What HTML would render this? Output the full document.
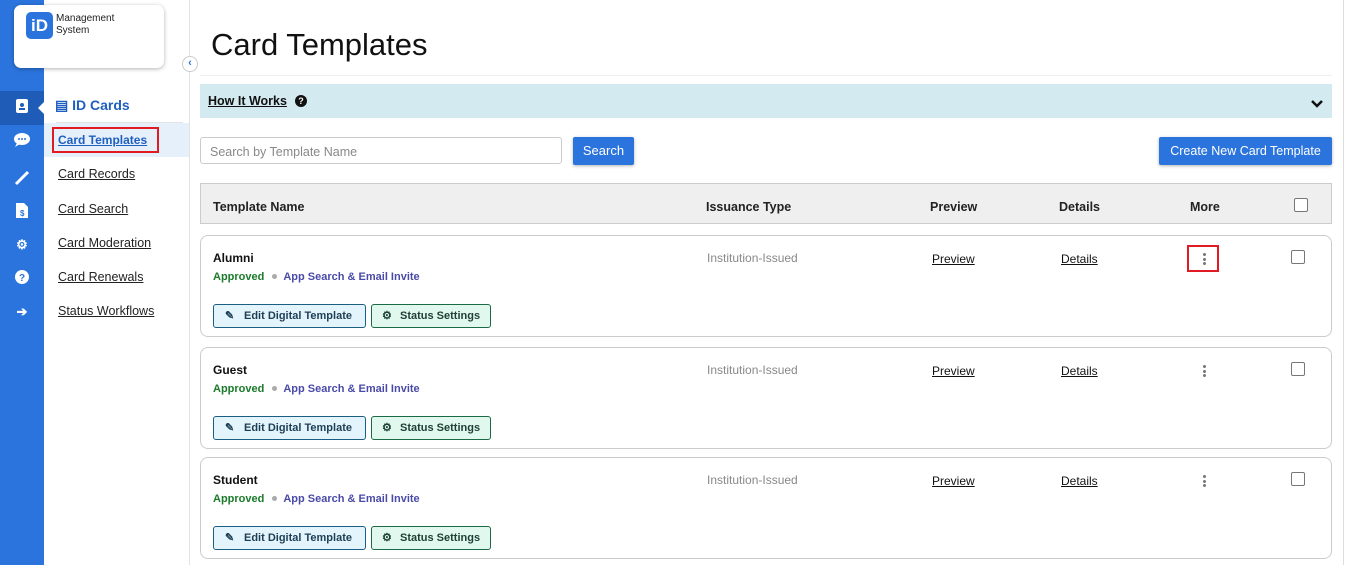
<!DOCTYPE html>
<html><head><meta charset="utf-8"><style>
*{box-sizing:border-box;margin:0;padding:0}
body{width:1347px;height:565px;overflow:hidden;background:#fff;font-family:"Liberation Sans",sans-serif;position:relative;color:#222}
.a{position:absolute}
.side{left:0;top:0;width:44px;height:565px;background:#2b74dd}
.act{left:0;top:91px;width:44px;height:34px;background:#1e5cb8}
.ic{left:13px;width:18px;height:18px;color:#fff;font-size:13px;text-align:center;line-height:18px;font-weight:bold}
.logo{left:14px;top:5px;width:150px;height:63px;background:#fff;border-radius:7px;box-shadow:0 1px 4px rgba(0,0,0,.3)}
.nav{left:44px;top:0;width:146px;height:565px;border-right:1px solid #e3e3e3}
.nl{left:58px;font-size:12.5px;color:#222;text-decoration:underline}
.btn{background:#2b74dd;color:#fff;font-size:13px;text-align:center;border-radius:2px;box-shadow:0 1px 3px rgba(0,0,0,.3)}
.card{left:200px;width:1132px;height:102px;border:1px solid #ccc;border-radius:8px}
.card .n{left:12px;top:15px;font-weight:bold;font-size:12px;color:#111}
.card .st{left:12px;top:35px;font-size:11px;font-weight:bold;color:#1a7a2a}
.card .st span{color:#4a4aa8}
.card .st i{display:inline-block;width:5px;height:5px;border-radius:50%;background:#aaa;margin:0 6px 2px 8px;vertical-align:middle}
.b1{left:12px;top:68px;width:153px;height:24px;border:1px solid #1b5e84;background:#e3f4fc;border-radius:3px;font-size:11px;font-weight:bold;color:#1d3f55;line-height:22px;padding-left:30px}
.b2{left:170px;top:68px;width:120px;height:24px;border:1px solid #1b6a45;background:#e1f8ee;border-radius:3px;font-size:11px;font-weight:bold;color:#1d3f35;line-height:22px;padding-left:28px}
.card .it{left:506px;top:15px;font-size:12px;color:#888}
.card .pv{left:731px;top:16px;font-size:12px;text-decoration:underline;color:#111}
.card .dt{left:860px;top:16px;font-size:12px;text-decoration:underline;color:#111}
.dots{left:1002px;top:17px;width:3px}
.dots b{display:block;width:3px;height:3px;border-radius:50%;background:#777;margin-bottom:1.5px}
.cb{width:14px;height:14px;border:1px solid #777;border-radius:2px;background:#fff}
.th{font-size:12.5px;font-weight:bold;top:16px;color:#222}
</style></head><body>
<div class="a side"></div>
<div class="a act"></div>
<div class="a" style="left:44px;top:102px;width:0;height:0;border-top:6px solid transparent;border-bottom:6px solid transparent;border-right:6px solid #fff;margin-left:-6px"></div>
<div class="a ic" style="top:99px"><svg width="12" height="14"><rect x="0" y="0" width="12" height="14" rx="2" fill="#fff"/><circle cx="6" cy="6" r="2" fill="#1e5cb8"/><rect x="3" y="9" width="6" height="2" fill="#1e5cb8"/></svg></div>
<div class="a ic" style="top:133px"><svg width="16" height="14"><ellipse cx="8" cy="6" rx="8" ry="6" fill="#fff"/><path d="M3 10l-2 4 5-3z" fill="#fff"/><circle cx="5" cy="6" r="1" fill="#2b74dd"/><circle cx="8" cy="6" r="1" fill="#2b74dd"/><circle cx="11" cy="6" r="1" fill="#2b74dd"/></svg></div>
<div class="a ic" style="top:170px"><svg width="16" height="16"><path d="M2 14L14 2M5 9l2 2M9 5l2 2" stroke="#fff" stroke-width="3"/></svg></div>
<div class="a ic" style="top:203px"><svg width="12" height="15"><path d="M0 0h8l4 4v11H0z" fill="#fff"/><text x="4" y="13" font-size="8" fill="#2b74dd">$</text></svg></div>
<div class="a ic" style="top:236px">⚙</div>
<div class="a ic" style="top:270px"><svg width="14" height="14"><circle cx="7" cy="7" r="7" fill="#fff"/><text x="4" y="11" font-size="10" font-weight="bold" fill="#2b74dd" font-family="Liberation Sans">?</text></svg></div>
<div class="a ic" style="top:303px">➔</div>
<div class="a nav"></div>
<div class="a logo"><div class="a" style="left:12px;top:7px;width:27px;height:27px;background:#2b74dd;border-radius:5px;color:#fff;font-weight:bold;font-size:17px;line-height:27px;text-align:center">iD</div><div class="a" style="left:42px;top:8px;font-size:10px;line-height:12px;color:#222">Management<br>System</div></div>
<div class="a" style="left:182px;top:56px;width:16px;height:16px;border-radius:50%;background:#fff;border:1px solid #ccc;color:#2b74dd;font-size:11px;text-align:center;line-height:13px;font-weight:bold">‹</div>
<div class="a" style="left:55px;top:97px;font-size:14px;font-weight:bold;color:#1f5fbf">▤ ID Cards</div>
<div class="a" style="left:56px;top:122px;width:127px;height:1px;background:#e3e3e3"></div>
<div class="a" style="left:44px;top:123px;width:145px;height:34px;background:#e6f0fb"></div>
<div class="a" style="left:52px;top:127px;width:107px;height:26px;border:2px solid #e01b24"></div>
<div class="a nl" style="top:133px;font-weight:bold;color:#1f5fbf;font-size:12px">Card Templates</div>
<div class="a nl" style="top:167px">Card Records</div>
<div class="a nl" style="top:202px">Card Search</div>
<div class="a nl" style="top:236px">Card Moderation</div>
<div class="a nl" style="top:270px">Card Renewals</div>
<div class="a nl" style="top:304px">Status Workflows</div>

<div class="a" style="left:211px;top:27px;font-size:31px;color:#111">Card Templates</div>
<div class="a" style="left:200px;top:75px;width:1132px;height:1px;background:#eee"></div>
<div class="a" style="left:1343px;top:0;width:1px;height:565px;background:#ddd"></div>
<div class="a" style="left:200px;top:84px;width:1132px;height:34px;background:#d2eaf0"></div>
<div class="a" style="left:208px;top:94px;font-size:12.5px;font-weight:bold;text-decoration:underline;color:#111">How It Works</div>
<div class="a" style="left:295px;top:95px;width:12px;height:12px;border-radius:50%;background:#111;color:#fff;font-size:9px;font-weight:bold;text-align:center;line-height:12px">?</div>
<div class="a" style="left:1311px;top:96px"><svg width="12" height="10"><path d="M1 2l5 5 5-5" stroke="#111" stroke-width="2.5" fill="none"/></svg></div>
<div class="a" style="left:200px;top:137px;width:362px;height:27px;border:1px solid #ccc;border-radius:3px;font-size:12.5px;color:#888;padding:7px 9px">Search by Template Name</div>
<div class="a btn" style="left:573px;top:137px;width:61px;height:28px;line-height:28px">Search</div>
<div class="a btn" style="left:1159px;top:137px;width:173px;height:28px;line-height:28px;font-size:12.5px">Create New Card Template</div>

<div class="a" style="left:200px;top:183px;width:1132px;height:41px;background:#efefef;border:1px solid #ccc">
<div class="a th" style="left:12px">Template Name</div>
<div class="a th" style="left:505px">Issuance Type</div>
<div class="a th" style="left:729px">Preview</div>
<div class="a th" style="left:858px">Details</div>
<div class="a th" style="left:989px">More</div>
<div class="a cb" style="left:1093px;top:14px"></div>
</div>

<div class="a card" style="top:235px"><div class="a n">Alumni</div><div class="a st">Approved<i></i><span>App Search &amp; Email Invite</span></div><div class="a b1">Edit Digital Template<span class="a" style="left:11px;top:0">✎</span></div><div class="a b2">Status Settings<span class="a" style="left:10px;top:0">⚙</span></div><div class="a it">Institution-Issued</div><div class="a pv">Preview</div><div class="a dt">Details</div><div class="a dots"><b></b><b></b><b></b></div><div class="a cb" style="left:1090px;top:14px"></div><div class="a" style="left:986px;top:9px;width:32px;height:27px;border:2px solid #e01b24"></div></div>
<div class="a card" style="top:347px"><div class="a n">Guest</div><div class="a st">Approved<i></i><span>App Search &amp; Email Invite</span></div><div class="a b1">Edit Digital Template<span class="a" style="left:11px;top:0">✎</span></div><div class="a b2">Status Settings<span class="a" style="left:10px;top:0">⚙</span></div><div class="a it">Institution-Issued</div><div class="a pv">Preview</div><div class="a dt">Details</div><div class="a dots"><b></b><b></b><b></b></div><div class="a cb" style="left:1090px;top:14px"></div></div>
<div class="a card" style="top:457px"><div class="a n">Student</div><div class="a st">Approved<i></i><span>App Search &amp; Email Invite</span></div><div class="a b1">Edit Digital Template<span class="a" style="left:11px;top:0">✎</span></div><div class="a b2">Status Settings<span class="a" style="left:10px;top:0">⚙</span></div><div class="a it">Institution-Issued</div><div class="a pv">Preview</div><div class="a dt">Details</div><div class="a dots"><b></b><b></b><b></b></div><div class="a cb" style="left:1090px;top:14px"></div></div>
</body></html>
